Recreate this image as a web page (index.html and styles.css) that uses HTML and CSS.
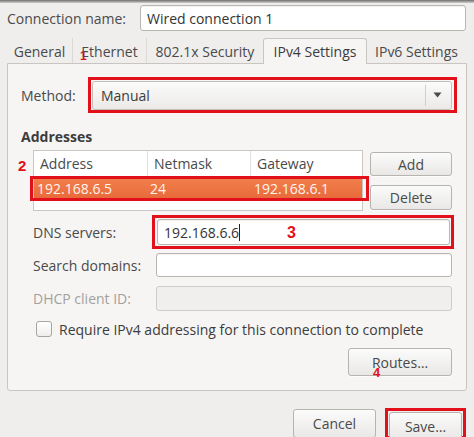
FILE: index.html
```html
<!DOCTYPE html>
<html>
<head>
<meta charset="utf-8">
<link rel="stylesheet" href="styles.css">
</head>
<body>
<div class="window">
  <div class="topbar"></div>
  <div class="name-row">
    <span class="lbl">Connection name:</span>
    <div class="entry name-entry">Wired connection 1</div>
  </div>
  <div class="tabs">
    <div class="tab t-general">General</div>
    <div class="tab t-eth">Ethernet</div>
    <div class="tab t-sec">802.1x Security</div>
    <div class="tab t-ipv4 active">IPv4 Settings</div>
    <div class="tab t-ipv6">IPv6 Settings</div>
  </div>
  <div class="panel">
    <div class="method-row">
      <span class="lbl method-lbl">Method:</span>
      <div class="mark mark-method">
        <div class="combo">
          <span class="combo-text">Manual</span>
          <span class="combo-sep"></span>
          <svg class="combo-arrow" width="9" height="6" viewBox="0 0 9 6"><path d="M0.5 0.5 L8.5 0.5 L4.5 5.5 Z" fill="#4a4a4a"/></svg>
        </div>
      </div>
    </div>
    <div class="section-title">Addresses</div>
    <div class="addr-row">
      <div class="addr-table">
        <div class="thead">
          <div class="th c1">Address</div>
          <div class="th c2">Netmask</div>
          <div class="th c3">Gateway</div>
        </div>
        <div class="trow selected">
          <div class="td c1">192.168.6.5</div>
          <div class="td c2">24</div>
          <div class="td c3">192.168.6.1</div>
        </div>
        <div class="mark mark-row"></div>
      </div>
      <div class="side-btns">
        <div class="btn btn-add">Add</div>
        <div class="btn btn-del">Delete</div>
      </div>
    </div>
    <div class="form-row dns-row">
      <span class="lbl form-lbl">DNS servers:</span>
      <div class="mark mark-dns">
        <div class="entry dns-entry">192.168.6.6<span class="caret"></span></div>
      </div>
    </div>
    <div class="form-row search-row">
      <span class="lbl form-lbl">Search domains:</span>
      <div class="entry form-entry"></div>
    </div>
    <div class="form-row dhcp-row">
      <span class="lbl form-lbl disabled">DHCP client ID:</span>
      <div class="entry form-entry entry-disabled"></div>
    </div>
    <div class="check-row">
      <span class="checkbox"></span>
      <span class="lbl check-lbl">Require IPv4 addressing for this connection to complete</span>
    </div>
    <div class="routes-row">
      <div class="btn btn-routes">Routes…</div>
    </div>
  </div>
  <div class="footer">
    <div class="btn btn-cancel">Cancel</div>
    <div class="mark mark-save">
      <div class="btn btn-save">Save…</div>
    </div>
  </div>
  <span class="anno anno-1">1</span>
  <span class="anno anno-2">2</span>
  <span class="anno anno-3">3</span>
  <span class="anno anno-4">4</span>
</div>
</body>
</html>
```

FILE: styles.css
```css
html, body {
  margin: 0;
  padding: 0;
}
body {
  width: 474px;
  height: 437px;
  overflow: hidden;
  background: #efeeed;
  font-family: "Open Sans", "DejaVu Sans", sans-serif;
  font-size: 14px;
  color: #3c3c3c;
}
.window {
  position: relative;
  width: 474px;
  height: 437px;
}
.topbar {
  height: 3px;
  background: linear-gradient(#6e6e6e, #cfcfcf);
}
.lbl {
  color: #4a4a4a;
  white-space: nowrap;
}
.entry {
  box-sizing: border-box;
  background: #ffffff;
  border: 1px solid #b9b6b2;
  border-radius: 3px;
  box-shadow: inset 0 1px 1px rgba(0,0,0,0.06);
  display: flex;
  align-items: center;
  padding-left: 6px;
  color: #333;
}
.name-row {
  display: flex;
  align-items: center;
  margin-top: 2px;
  padding: 0 8px 0 7px;
  height: 26px;
}
.name-entry {
  margin-left: auto;
  width: 326px;
  height: 26px;
}
.tabs {
  display: flex;
  margin: 7px 0 0 7px;
  height: 25px;
  position: relative;
  z-index: 1;
}
.tab {
  box-sizing: border-box;
  height: 25px;
  padding-top: 4px;
  text-align: center;
  color: #4a4a4a;
  white-space: nowrap;
  border-right: 1px solid #dcdad7;
}
.t-general { width: 66px; }
.t-eth { width: 74px; }
.t-sec { width: 116px; border-right: none; }
.t-ipv4 { width: 104px; }
.t-ipv6 { width: 99px; border-right: none; }
.tab.active {
  background: #f6f5f4;
  border: 1px solid #c9c6c2;
  border-bottom: none;
  border-radius: 3px 3px 0 0;
  height: 26px;
  padding-top: 3px;
  color: #3c3c3c;
}
.panel {
  box-sizing: border-box;
  margin: 0 7px 0 7px;
  height: 328px;
  background: #f6f5f4;
  border: 1px solid #c9c6c2;
  border-radius: 0 0 3px 3px;
}
.mark {
  box-sizing: border-box;
  border: 3px solid #e2101b;
}
.method-row {
  display: flex;
  align-items: center;
  margin-top: 13px;
  padding-left: 13px;
  height: 36px;
}
.method-lbl {
  width: 67px;
}
.mark-method {
  width: 369px;
  height: 36px;
  padding: 0 2px 0 1px;
  display: flex;
  align-items: center;
}
.combo {
  box-sizing: border-box;
  flex: 1;
  height: 29px;
  border: 1px solid #c2bfbb;
  border-radius: 3px;
  background: linear-gradient(#fbfbfa, #ebeae8);
  display: flex;
  align-items: center;
  padding-left: 8px;
}
.combo-text { flex: 1; color: #3c3c3c; }
.combo-sep {
  width: 1px;
  height: 21px;
  background: #d2d0cd;
  margin-right: 7px;
}
.combo-arrow { margin-right: 9px; }
.section-title {
  font-weight: bold;
  color: #3c3c3c;
  margin: 15px 0 0 13px;
  height: 17px;
  line-height: 17px;
}
.addr-row {
  display: flex;
  margin-top: 5px;
  padding-left: 25px;
}
.addr-table {
  position: relative;
  box-sizing: border-box;
  width: 330px;
  height: 61px;
  background: #ffffff;
  border: 1px solid #cac7c3;
}
.thead, .trow {
  display: grid;
  grid-template-columns: 114px 103px 1fr;
}
.thead {
  height: 25px;
}
.th {
  display: flex;
  align-items: center;
  padding-left: 6px;
  color: #4a4a4a;
}
.th.c1, .th.c2 {
  border-right: 1px solid #e2e0dd;
}
.trow.selected {
  margin-top: 2px;
  height: 20px;
  background: linear-gradient(#f2804d, #e86a3b);
  color: #fff4ee;
}
.td {
  display: flex;
  align-items: center;
  padding-left: 3px;
}
.td.c2 { padding-left: 2px; }
.td.c3 { padding-left: 3px; }
.mark-row {
  position: absolute;
  left: -4px;
  top: 25px;
  width: 339px;
  height: 25px;
}
.side-btns {
  display: flex;
  flex-direction: column;
  gap: 9px;
  margin-left: 7px;
  margin-top: 2px;
}
.btn {
  box-sizing: border-box;
  display: flex;
  align-items: center;
  justify-content: center;
  border: 1px solid #b7b4b0;
  border-radius: 3px;
  background: linear-gradient(#fbfbfb, #e9e8e6);
  box-shadow: 0 1px 0 rgba(255,255,255,0.7);
  color: #4a4a4a;
  white-space: nowrap;
}
.btn-add, .btn-del {
  width: 82px;
  height: 24px;
}
.btn-del { height: 25px; }
.form-row {
  display: flex;
  align-items: center;
  padding-left: 25px;
}
.form-lbl {
  width: 123px;
}
.lbl.disabled {
  color: #a3a19e;
}
.dns-row {
  margin-top: 4px;
  height: 34px;
}
.mark-dns {
  margin-left: -4px;
  width: 302px;
  height: 34px;
  padding: 0 1px 0 2px;
  display: flex;
  align-items: center;
}
.dns-entry {
  flex: 1;
  height: 26px;
}
.caret {
  display: inline-block;
  width: 1px;
  height: 17px;
  background: #222;
}
.search-row {
  margin-top: 4px;
  height: 24px;
}
.form-entry {
  width: 296px;
  height: 24px;
}
.dhcp-row {
  margin-top: 9px;
  height: 25px;
}
.dhcp-row .form-entry { height: 25px; }
.entry-disabled {
  background: #f0efee;
  border-color: #cfccc8;
  box-shadow: none;
}
.check-row {
  display: flex;
  align-items: center;
  margin-top: 10px;
  padding-left: 28px;
  height: 16px;
}
.checkbox {
  box-sizing: border-box;
  width: 16px;
  height: 16px;
  border: 1px solid #a7a4a0;
  border-radius: 3px;
  background: linear-gradient(#ffffff, #efeeec);
  margin-right: 7px;
}
.check-lbl { color: #3c3c3c; }
.routes-row {
  display: flex;
  justify-content: flex-end;
  margin-top: 11px;
  padding-right: 14px;
}
.btn-routes {
  width: 104px;
  height: 28px;
}
.footer {
  display: flex;
  justify-content: flex-end;
  align-items: flex-start;
  margin-top: 17px;
  padding-right: 8px;
}
.btn-cancel {
  width: 83px;
  height: 29px;
  margin-top: 1px;
  margin-right: 9px;
}
.mark-save {
  width: 81px;
  height: 31px;
  padding: 1px 1px 0 1px;
}
.btn-save {
  width: 73px;
  height: 28px;
}
.anno {
  position: absolute;
  color: #e2101b;
  font-family: "Liberation Sans", Arial, sans-serif;
  font-weight: bold;
  line-height: 1;
}
.anno-1 { left: 80px; top: 50px; font-size: 12px; }
.anno-2 { left: 18px; top: 158px; font-size: 15px; }
.anno-3 { left: 287px; top: 225px; font-size: 16px; }
.anno-4 { left: 373px; top: 366px; font-size: 13px; }
```
